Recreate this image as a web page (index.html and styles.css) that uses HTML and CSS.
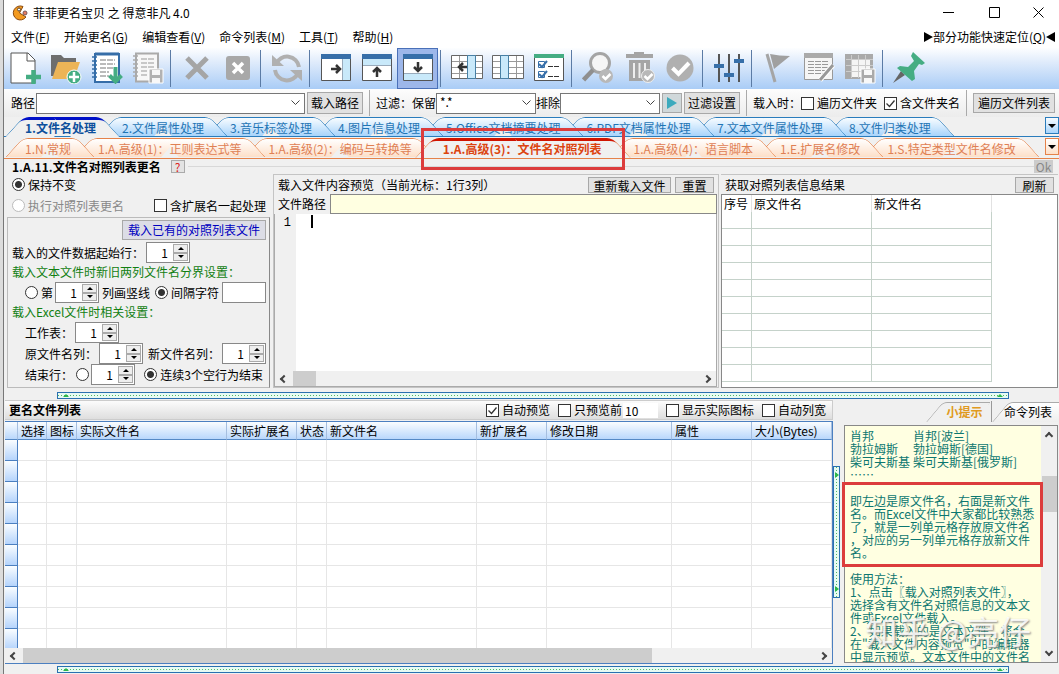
FILE: index.html
```
<!DOCTYPE html>
<html lang="zh-CN">
<head>
    <meta charset="UTF-8">
    <meta name="viewport" content="width=device-width, initial-scale=1.0">
    <title>菲菲更名宝贝 之 得意非凡 4.0</title>
    <link rel="stylesheet" href="styles.css">
</head>
<body>

<div class="desktop-edge"></div>
<div class="window">
    <header class="titlebar">
        <svg width="18" height="18" viewBox="0 0 18 18">
            <path d="M12 2.500A7 7 0 1 0 15 13L8.500 9z" fill="#f39a20" stroke="#8a4a10"/>
            <circle cx="8" cy="5.500" r="1.500" fill="#fff" stroke="#543"/>
            <circle cx="14" cy="9" r="2" fill="#e77c62" stroke="#755"/>
        </svg>
        <h1>菲菲更名宝贝 之 得意非凡 4.0</h1>
        <button class="win-button" aria-label="最小化"><svg width="11" height="11"><path d="M0 5.500H11" stroke="#000"/></svg></button>
        <button class="win-button" aria-label="最大化"><svg width="11" height="11"><path d="M.5 .5h10v10H.5z" fill="none" stroke="#000"/></svg></button>
        <button class="win-button" aria-label="关闭"><svg width="11" height="11"><path d="M.5 .5l10 10M10.500 .5l-10 10" stroke="#000"/></svg></button>
    </header>

    <nav class="menu">
        <button>文件(<u>F</u>)</button>
        <button>开始更名(<u>G</u>)</button>
        <button>编辑查看(<u>V</u>)</button>
        <button>命令列表(<u>M</u>)</button>
        <button>工具(<u>T</u>)</button>
        <button>帮助(<u>H</u>)</button>
        <button class="quick"><i class="tri-right"></i>部分功能快速定位(<u>Q</u>)<i class="tri-left"></i></button>
    </nav>

    <div class="toolbar">
        <button aria-label="新建"><svg viewBox="0 0 32 32"><path d="M2 1h17l7 7v23H2z" fill="#fff" stroke="#555"/><path d="M18 1v8h8" fill="none" stroke="#555"/><path d="M24.500 18v14M17 25h15" stroke="#45ad83" stroke-width="4.500"/></svg></button>
        <button aria-label="打开"><svg viewBox="0 0 32 32"><path d="M1 3h10l3 3h12v6H8L4 24H1z" fill="#6e6e6e"/><path d="M8 10h22l-6 17H2z" fill="#ecb457"/><circle cx="24" cy="25" r="7" fill="#45ad83" stroke="#fff"/><path d="M24 20v10M19 25h10" stroke="#fff" stroke-width="2.500"/></svg></button>
        <button aria-label="载入"><svg viewBox="0 0 32 32"><path d="M4 2h24v28H4z" fill="#fff" stroke="#356da8" stroke-width="2"/><path d="M4 2h24" stroke="#356da8" stroke-width="3"/><path d="M9 8h15M9 12h15M9 16h15M9 20h9M9 24h9" stroke="#777" stroke-dasharray="6 1"/><path d="M1 5h5M1 9h5M1 13h5M1 17h5M1 21h5M1 25h5" stroke="#356da8" stroke-width="1.500"/><path d="M24.500 15v14M18.500 23.500l6 6 6-6" fill="none" stroke="#45ad83" stroke-width="4"/></svg></button>
        <button aria-label="保存"><svg viewBox="0 0 32 32"><path d="M4 1.500h22v28H4z" fill="#f7f7f7" stroke="#aaa" stroke-width="2"/><path d="M9 7h14M9 11h14M9 15h14M9 19h7M9 23h7" stroke="#999" stroke-dasharray="6 1"/><path d="M1 4h5M1 8h5M1 12h5M1 16h5M1 20h5M1 24h5" stroke="#aaa" stroke-width="1.500"/><path d="M17 17h14v14H17z" fill="#b2b2b2" stroke="#fff"/><path d="M20 18h8v5h-8zM20 26h8v5h-8z" fill="#f8f8f8"/></svg></button>
        <span class="sep"></span>
        <button aria-label="删除"><svg viewBox="0 0 32 32"><path d="M6 6l20 20M26 6L6 26" stroke="#a5a5a5" stroke-width="5"/></svg></button>
        <button aria-label="清空"><svg viewBox="0 0 32 32"><rect x="4" y="4" width="24" height="24" rx="3" fill="#a8a8a8"/><path d="M11 11l10 10M21 11L11 21" stroke="#fff" stroke-width="3.500"/></svg></button>
        <span class="sep"></span>
        <button aria-label="刷新列表"><svg viewBox="0 0 32 32"><path d="M5 12A12 12 0 0 1 28 15M27 21A12 12 0 0 1 4 18" fill="none" stroke="#b0b0b0" stroke-width="4"/><path d="M1 3v11h12zM31 29V18H19z" fill="#b0b0b0"/></svg></button>
        <span class="sep"></span>
        <button aria-label="右侧面板"><svg viewBox="0 0 32 32"><path d="M1.500 3.500h29v25h-29z" fill="#fff" stroke="#555"/><path d="M1 2h30v5H1z" fill="#376fa9"/><path d="M23 7h7v21h-7z" fill="#c9e9fa"/><path d="M22.500 7v21" stroke="#9ab"/><path d="M11 17h9M16 13l4 4-4 4" fill="none" stroke="#333" stroke-width="2.500"/></svg></button>
        <button aria-label="上部面板"><svg viewBox="0 0 32 32"><path d="M1.500 3.500h29v25h-29z" fill="#fff" stroke="#555"/><path d="M1 2h30v5H1z" fill="#376fa9"/><path d="M2 7h28v6H2z" fill="#c9e9fa"/><path d="M2 13.500h28" stroke="#9ab"/><path d="M16 25v-9M12 20l4-4 4 4" fill="none" stroke="#333" stroke-width="2.500"/></svg></button>
        <button class="pressed" aria-label="下部面板"><svg viewBox="0 0 32 32"><path d="M1.500 3.500h29v25h-29z" fill="#fff" stroke="#555"/><path d="M1 2h30v5H1z" fill="#376fa9"/><path d="M2 22h28v6H2z" fill="#c9e9fa"/><path d="M2 21.500h28" stroke="#9ab"/><path d="M16 10v9M12 15l4 4 4-4" fill="none" stroke="#333" stroke-width="2.500"/></svg></button>
        <span class="sep"></span>
        <button aria-label="插入列"><svg viewBox="0 0 32 32"><path d="M.5 3.500h31v23H.5z" fill="#fff" stroke="#666"/><path d="M1 9.500h30M1 15.500h30M1 21.500h30M8.500 4v22M24.500 4v22" stroke="#999"/><path d="M16.500 3.500h8v23h-8z" fill="#c9e9fa" stroke="#4780a5"/><path d="M16 15H8M12 11l-4 4 4 4" fill="none" stroke="#333" stroke-width="2.500"/></svg></button>
        <button aria-label="选择列"><svg viewBox="0 0 32 32"><path d="M.5 3.500h31v23H.5z" fill="#fff" stroke="#666"/><path d="M1 9.500h30M1 15.500h30M1 21.500h30M8.500 4v22M24.500 4v22" stroke="#999"/><path d="M8.500 3.500h8v23h-8z" fill="#c9e9fa" stroke="#4780a5"/></svg></button>
        <button aria-label="选项"><svg viewBox="0 0 32 32"><path d="M1.500 3.500h29v25h-29z" fill="#fff" stroke="#555"/><path d="M1 2h30v4H1z" fill="#45ad83"/><path d="M5.500 9.500h6v6h-6zM5.500 19.500h6v6h-6z" fill="none" stroke="#376fa9"/><path d="M6 12l3 3 5-6M6 22l3 3 5-6" fill="none" stroke="#376fa9" stroke-width="2"/><path d="M15 14.500h12M15 24.500h12" stroke="#333" stroke-dasharray="5 1"/></svg></button>
        <span class="sep"></span>
        <button aria-label="查找"><svg viewBox="0 0 32 32"><circle cx="18" cy="11" r="9.500" fill="#f6f6f6" stroke="#a5a5a5" stroke-width="3"/><path d="M11 18L1.500 28" stroke="#8f8f8f" stroke-width="4.500"/><circle cx="24" cy="24" r="7" fill="#b8b8b8"/><path d="M20.500 24l3 3 5-5" fill="none" stroke="#fff" stroke-width="2.500"/></svg></button>
        <button aria-label="清理"><svg viewBox="0 0 32 32"><path d="M11 2V0h10v2h9v4H3V2zM6 8h21v21H6z" fill="#a5a5a5"/><path d="M11 11v15M16.500 11v15M22 11v9" stroke="#eee" stroke-width="2"/><circle cx="25" cy="24" r="6.500" fill="#b8b8b8" stroke="#eee"/><path d="M21.500 24l3 3 5-5" fill="none" stroke="#fff" stroke-width="2.500"/></svg></button>
        <button aria-label="确认"><svg viewBox="0 0 32 32"><circle cx="16" cy="16" r="13.500" fill="#b0b0b0"/><path d="M8.500 16l6 6L25 11" fill="none" stroke="#fff" stroke-width="4"/></svg></button>
        <span class="sep"></span>
        <button aria-label="调整"><svg viewBox="0 0 32 32"><path d="M6 2v28M16 2v28M26 2v28" stroke="#555" stroke-width="2"/><path d="M1 12h10v4H1zM11 21h10v4H11zM21 7h10v4H21z" fill="#376fa9"/></svg></button>
        <span class="sep"></span>
        <button aria-label="标记"><svg viewBox="0 0 32 32"><path d="M5 2l8 28" stroke="#a5a5a5" stroke-width="3"/><path d="M8 2q9 2 20 2l-16 13z" fill="#a0a0a0"/></svg></button>
        <button aria-label="编辑列表"><svg viewBox="0 0 32 32"><path d="M1.500 2.500h28v25h-28z" fill="#f5f5f5" stroke="#999"/><path d="M1 1h29v5H1z" fill="#aaa"/><path d="M5 9.500h21M5 12.500h21M5 15.500h21M5 18.500h19M5 21.500h15" stroke="#999" stroke-dasharray="6 1"/><path d="M30 13L17 28" stroke="#fff" stroke-width="5"/><path d="M30 13L17 28" stroke="#999" stroke-width="3"/></svg></button>
        <button aria-label="保存表格"><svg viewBox="0 0 32 32"><path d="M1 2h28v25H1z" fill="#aaa"/><path d="M8 8h18v17H8z" fill="#f5f5f5"/><path d="M2 7.500h27M2 13.500h27M2 19.500h27M7.500 3v23M14.500 3v23M21.500 3v23" stroke="#ccc"/><path d="M17 17h14v14H17z" fill="#aaa" stroke="#fff"/><path d="M20 18h8v5h-8zM20 26h8v5h-8z" fill="#f8f8f8"/></svg></button>
        <span class="sep"></span>
        <button aria-label="置顶"><svg viewBox="0 0 32 32"><path d="M0 31l8-12 4 4z" fill="#666"/><path d="M20 0l12 11-3 2-3-1-5 7 1 8-3 2L4 16l3-2 8 1 6-6-3-5z" fill="#45ad83"/></svg></button>
    </div>

    <div class="pathbar">
        <label for="path">路径</label>
        <select id="path" class="path-select"><option></option></select>
        <button class="btn load-path">载入路径</button>
        <span class="bar-sep"></span>
        <label for="keep">过滤：保留</label>
        <select id="keep" class="filter-select"><option>*.*</option></select>
        <label for="exclude">排除</label>
        <select id="exclude" class="filter-select"><option></option></select>
        <button class="btn play" aria-label="应用过滤"><svg width="12" height="12"><path d="M1 0v12l10-6z" fill="#3caabd"/></svg></button>
        <button class="btn filter-set">过滤设置</button>
        <span class="bar-sep"></span>
        <span>载入时：</span>
        <label class="check"><input type="checkbox">遍历文件夹</label>
        <label class="check gap-left"><input type="checkbox" checked>含文件夹名</label>
        <span class="bar-sep"></span>
        <button class="btn list-all">遍历文件列表</button>
    </div>

    <div class="tabs blue">
        <button class="tab active">1.文件名处理</button>
        <button class="tab">2.文件属性处理</button>
        <button class="tab">3.音乐标签处理</button>
        <button class="tab">4.图片信息处理</button>
        <button class="tab">5.Office文档摘要处理</button>
        <button class="tab">6.PDF文档属性处理</button>
        <button class="tab">7.文本文件属性处理</button>
        <button class="tab">8.文件归类处理</button>
        <button class="tab-more" aria-label="更多标签"></button>
    </div>
    <div class="tabs orange">
        <button class="tab">1.N.常规</button>
        <button class="tab">1.A.高级(1)：正则表达式等</button>
        <button class="tab">1.A.高级(2)：编码与转换等</button>
        <button class="tab active">1.A.高级(3)：文件名对照列表<span class="mark"></span></button>
        <button class="tab">1.A.高级(4)：语言脚本</button>
        <button class="tab">1.E.扩展名修改</button>
        <button class="tab">1.S.特定类型文件名修改</button>
        <button class="tab-more" aria-label="更多功能"></button>
    </div>

    <div class="group-title">
        <h2>1.A.11.文件名对照列表更名</h2>
        <button class="help">?</button>
        <span class="rule"></span>
        <button class="ok" disabled>Ok</button>
    </div>

    <main class="work">
        <section class="options">
            <div class="option-row"><label class="check"><input type="radio" name="mode" checked>保持不变</label></div>
            <div class="option-row">
                <label class="check muted"><input type="radio" name="mode" disabled>执行对照列表更名</label>
                <label class="check push"><input type="checkbox">含扩展名一起处理</label>
            </div>
            <div class="settings">
                <button class="btn load-list">载入已有的对照列表文件</button>
                <div class="row">
                    <label for="start">载入的文件数据起始行：</label>
                    <span class="spin"><input id="start" value="1"><span class="arrows"><button aria-label="加"></button><button aria-label="减"></button></span></span>
                </div>
                <div class="caption">载入文本文件时新旧两列文件名分界设置：</div>
                <div class="row indent">
                    <label class="check"><input type="radio" name="split">第</label>
                    <span class="spin"><input aria-label="列" value="1"><span class="arrows"><button aria-label="加"></button><button aria-label="减"></button></span></span>
                    <span class="after">列画竖线</span>
                    <label class="check push"><input type="radio" name="split" checked>间隔字符</label>
                    <input class="char" aria-label="间隔字符">
                </div>
                <div class="caption">载入Excel文件时相关设置：</div>
                <div class="row indent">
                    <label for="sheet">工作表：</label>
                    <span class="spin"><input id="sheet" value="1"><span class="arrows"><button aria-label="加"></button><button aria-label="减"></button></span></span>
                </div>
                <div class="row indent">
                    <label for="old">原文件名列：</label>
                    <span class="spin"><input id="old" value="1"><span class="arrows"><button aria-label="加"></button><button aria-label="减"></button></span></span>
                    <label for="new" class="push">新文件名列：</label>
                    <span class="spin"><input id="new" value="1"><span class="arrows"><button aria-label="加"></button><button aria-label="减"></button></span></span>
                </div>
                <div class="row indent">
                    <label class="check">结束行：<input type="radio" name="end"></label>
                    <span class="spin"><input aria-label="结束行" value="1"><span class="arrows"><button aria-label="加"></button><button aria-label="减"></button></span></span>
                    <label class="check push end"><input type="radio" name="end" checked>连续3个空行为结束</label>
                </div>
            </div>
        </section>

        <section class="preview">
            <div class="panel-head">
                <span>载入文件内容预览（当前光标：1行3列）</span>
                <button class="btn small reload">重新载入文件</button>
                <button class="btn small reset">重置</button>
            </div>
            <div class="file-row">
                <label for="file">文件路径</label>
                <input id="file">
            </div>
            <div class="editor">
                <div class="lines"><span class="gutter">1</span><span class="caret"></span></div>
                <div class="hscroll"><i class="arrow left"></i><span class="thumb"></span><i class="arrow right"></i></div>
            </div>
        </section>

        <section class="result">
            <div class="panel-head">
                <span>获取对照列表信息结果</span>
                <button class="btn small refresh">刷新</button>
            </div>
            <div class="result-box">
                <table class="result-table">
                    <thead><tr><th class="c-no">序号</th><th>原文件名</th><th>新文件名</th></tr></thead>
                    <tbody id="resultRows"></tbody>
                </table>
            </div>
        </section>
    </main>

    <div class="splitter"><i></i><i></i></div>

    <div class="bottom">
        <section class="list">
            <div class="list-head">
                <h2>更名文件列表</h2>
                <label class="check"><input type="checkbox" checked>自动预览</label>
                <label class="check"><input type="checkbox">只预览前</label>
                <input class="count" value="10" aria-label="预览数量">
                <label class="check"><input type="checkbox">显示实际图标</label>
                <label class="check"><input type="checkbox">自动列宽</label>
            </div>
            <div class="list-box">
                <div class="list-scroll">
                    <table class="list-table">
                        <colgroup><col class="w13"><col class="w29"><col class="w30"><col class="w150"><col class="w70"><col class="w30"><col class="w150"><col class="w70"><col class="w125"><col class="w80"><col></colgroup>
                        <thead><tr><th></th><th>选择</th><th>图标</th><th>实际文件名</th><th>实际扩展名</th><th>状态</th><th>新文件名</th><th>新扩展名</th><th>修改日期</th><th>属性</th><th>大小(Bytes)</th></tr></thead>
                        <tbody id="fileRows"></tbody>
                    </table>
                </div>
                <div class="hscroll"><i class="arrow left"></i><span class="thumb long"></span><i class="arrow right"></i></div>
            </div>
        </section>
        <div class="vsplitter"><i></i><i></i></div>
        <aside class="side">
            <div class="side-tabs">
                <button class="side-tab active">小提示</button>
                <button class="side-tab">命令列表</button>
            </div>
            <div class="tips">
                <div class="tips-text"><span class="name">肖邦</span>肖邦[波兰]
<span class="name">勃拉姆斯</span>勃拉姆斯[德国]
<span class="name">柴可夫斯基</span>柴可夫斯基[俄罗斯]
……

即左边是原文件名，右面是新文件
名。而Excel文件中大家都比较熟悉
了，就是一列单元格存放原文件名
，对应的另一列单元格存放新文件
名。

使用方法：
1、点击〖载入对照列表文件〗，
选择含有文件名对照信息的文本文
件或Excel文件载入。
2、如果载入的是文本文件，将会
在"载入文件内容预览"中的编辑器
中显示预览。文本文件中的文件名</div>
                <div class="vscroll"><i class="arrow up"></i><span class="thumb"></span><i class="arrow down"></i></div>
                <span class="tips-mark"></span>
                <span class="watermark">知乎 @亮仔</span>
            </div>
        </aside>
    </div>

    <div class="splitter"><i></i><i></i></div>
</div>

<script>
    function fillRows(id, rows, cols) {
        document.getElementById(id).innerHTML = ('<tr>' + '<td></td>'.repeat(cols) + '</tr>').repeat(rows);
    }
    fillRows('resultRows', 10, 3);
    fillRows('fileRows', 12, 11);
</script>

</body>
</html>
```
FILE: styles.css
```
* {
    box-sizing: border-box;
}
body {
    margin: 0;
    display: flex;
    height: 100vh;
    overflow: hidden;
    background: #f0f0f0;
    color: #000;
    font: 12px/14px "Noto Sans CJK SC", sans-serif;
    white-space: nowrap;
}
button, input, select {
    margin: 0;
    padding: 0;
    border: 0;
    background: none;
    color: inherit;
    font: inherit;
}
h1, h2 {
    margin: 0;
    font-size: 12px;
}
h1 {
    font-weight: normal;
}
.desktop-edge {
    width: 4px;
    background: #dcdcdc;
    border-right: 1px solid #777;
}
.window {
    flex: 1;
    min-width: 0;
    display: flex;
    flex-direction: column;
}

/* title and menu */
.titlebar {
    display: flex;
    align-items: center;
    height: 25px;
    padding-left: 7px;
    background: #fff;
}
.titlebar h1 {
    flex: 1;
    padding-left: 4px;
}
.win-button {
    width: 46px;
    height: 25px;
}
.win-button svg {
    display: block;
    margin: auto;
}
.win-button:last-child {
    width: 42px;
}
.menu {
    display: flex;
    align-items: center;
    gap: 14px;
    height: 25px;
    padding: 0 4px 2px 7px;
    background: #fff;
}
.quick {
    display: flex;
    align-items: center;
    margin-left: auto;
}
.tri-right, .tri-left {
    border: 5px solid transparent;
}
.tri-right {
    border-left: 9px solid #000;
    border-right: 0;
}
.tri-left {
    border-right: 9px solid #000;
    border-left: 0;
}

/* icon toolbar */
.toolbar {
    display: flex;
    height: 41px;
    margin-top: -2px;
    background: linear-gradient(#fdfeff, #dfebfb 35%, #a9ccf6);
}
.toolbar button {
    width: 41px;
    padding: 3px 4px 5px;
    border: 1px solid transparent;
}
.toolbar svg {
    display: block;
    width: 32px;
    height: 32px;
}
.toolbar .pressed {
    border-color: #4a70b8;
    background: #9db7ea;
}
.sep {
    width: 8px;
    margin: 2px 0;
    background: linear-gradient(#5b7ba5, #5b7ba5) 2px 0 / 1px 100% no-repeat;
}

/* path and filter */
.pathbar {
    display: flex;
    align-items: center;
    height: 28px;
    padding: 0 4px 0 7px;
    background: linear-gradient(#fdfdfd, #ececec);
}
select {
    height: 21px;
    padding: 0 20px 3px 3px;
    border: 1px solid #777;
    appearance: none;
    background: #fff url("data:image/svg+xml,%3Csvg xmlns='http://www.w3.org/2000/svg' width='9' height='6'%3E%3Cpath d='M.5 .5l4 4 4-4' fill='none' stroke='%23444'/%3E%3C/svg%3E") right 4px center no-repeat;
}
.path-select {
    flex: 1;
    margin: 0 2px 0 1px;
}
.filter-select {
    width: 100px;
}
.btn {
    border: 1px solid #a8a8a8;
    background: #e1e1e1;
    height: 22px;
}
.load-path {
    width: 56px;
}
.play {
    width: 20px;
    height: 20px;
    margin: 0 2px;
    background: #d0d8da;
}
.play svg {
    display: block;
    margin: auto;
}
.filter-set {
    width: 56px;
}
.list-all {
    width: 82px;
    height: 20px;
}
.bar-sep {
    width: 1px;
    height: 26px;
    margin: 0 6px;
    background: #aaa;
}
.check {
    display: flex;
    align-items: center;
    gap: 3px;
}
.gap-left {
    margin-left: 7px;
}
input[type="checkbox"], input[type="radio"] {
    appearance: none;
    flex: none;
    width: 13px;
    height: 13px;
    border: 1px solid #333;
    background: #fff;
}
input[type="checkbox"]:checked {
    background: #fff url("data:image/svg+xml,%3Csvg xmlns='http://www.w3.org/2000/svg' width='11' height='11'%3E%3Cpath d='M1.500 5.500l3 3 5-6' fill='none' stroke='%23333' stroke-width='1.3'/%3E%3C/svg%3E");
}
input[type="radio"] {
    border-radius: 50%;
}
input[type="radio"]:checked {
    background: radial-gradient(circle, #333 3px, #fff 4px);
}
input[type="radio"]:disabled {
    border-color: #bbb;
}
.muted {
    color: #888;
}
.push {
    margin-left: auto;
}

/* slanted tabs */
.tabs {
    position: relative;
    z-index: 0;
    display: flex;
    height: 20px;
    padding-left: 1px;
    border-bottom: 1px solid #2a7cbc;
    --line: #2a7cbc;
    --fill: linear-gradient(#f8fcff, #a8d4fb);
    color: #1f75b5;
}
.orange {
    height: 21px;
    margin-top: 1px;
    z-index: 1;
    border-color: #e5824a;
    --line: #e5824a;
    --fill: linear-gradient(#fff, #fddfc8);
    color: #df8054;
}
.tab {
    position: relative;
    flex: none;
    height: 20px;
    margin-left: -22px;
    padding: 2px 24px 0;
    z-index: 1;
}
.orange .tab {
    margin-left: -21px;
}
.tabs .tab:first-child {
    margin-left: 0;
    padding-left: 20px;
}
.tab::before, .tab::after {
    content: "";
    position: absolute;
    top: 0;
    bottom: 1px;
    z-index: -1;
    border-top: 1px solid var(--line);
    background: var(--fill);
}
.tab::before {
    left: 9px;
    right: 50%;
    border-left: 1px solid var(--line);
    border-top-left-radius: 6px;
    transform: skewX(-42deg);
}
.tab::after {
    left: 50%;
    right: 9px;
    border-right: 1px solid var(--line);
    border-top-right-radius: 6px;
    transform: skewX(42deg);
}
.tab:nth-child(1) { z-index: 9; }
.tab:nth-child(2) { z-index: 8; }
.tab:nth-child(3) { z-index: 7; }
.tab:nth-child(4) { z-index: 6; }
.tab:nth-child(5) { z-index: 5; }
.tab:nth-child(6) { z-index: 4; }
.tab:nth-child(7) { z-index: 3; }
.tab:nth-child(8) { z-index: 2; }
.tabs .tab.active {
    z-index: 10;
    font-weight: bold;
    color: #0d4f9c;
    --fill: #f0f0f0;
}
.tab.active::before, .tab.active::after {
    border-top: 3px solid #0010c8;
    bottom: 0;
}
.orange .tab.active {
    padding: 2px 29px 0 28px;
    color: #dc4410;
}
.orange .tab.active::before, .orange .tab.active::after {
    border-top-color: #d01400;
}
.tab-more {
    width: 14px;
    height: 17px;
    margin-left: auto;
    border: 1px solid var(--line);
    background: var(--fill);
}
.tab-more::after {
    content: "";
    display: block;
    width: 0;
    margin: auto;
    border: 4px solid transparent;
    border-top-color: #000;
    border-bottom: 0;
}
.mark {
    position: absolute;
    inset: -10px 6px -12px 6px;
    border: 3px solid #dc3c3c;
}

/* work area */
.group-title {
    display: flex;
    align-items: center;
    height: 15px;
    padding: 0 6px 0 8px;
}
.help {
    width: 14px;
    height: 13px;
    margin-left: 10px;
    border: 1px solid #aaa;
    background: #e3e3e3;
    color: #d22;
    line-height: 11px;
}
.rule {
    flex: 1;
    height: 1px;
    margin-left: 3px;
    background: #d8d8d8;
}
.ok {
    width: 19px;
    height: 13px;
    background: #ccc;
    color: #888;
    line-height: 12px;
}
.work {
    display: flex;
    padding: 0 1px 2px 3px;
}
.options {
    width: 263px;
}
.option-row {
    display: flex;
    align-items: center;
    height: 21px;
    padding: 0 4px 0 5px;
}
.settings {
    margin-top: 1px;
    padding: 2px 3px 2px 4px;
    border: 1px solid #bbb;
    border-right-color: #888;
}
.load-list {
    display: block;
    width: 144px;
    height: 20px;
    margin: 0 0 2px auto;
    color: #0000c0;
    background: #dcdde6;
}
.row {
    display: flex;
    align-items: center;
    height: 21px;
}
.indent {
    padding-left: 13px;
}
.row .push.end {
    margin-right: 3px;
}
.after {
    padding-left: 3px;
}
.caption {
    height: 19px;
    line-height: 18px;
    color: #128012;
}
.spin {
    display: flex;
    width: 44px;
    height: 21px;
    margin-left: 2px;
    padding: 1px;
    border: 1px solid #888;
    background: #fff;
}
.spin input {
    flex: 1;
    min-width: 0;
    padding-right: 5px;
    text-align: right;
}
.arrows {
    display: flex;
    flex-direction: column;
    width: 15px;
}
.arrows button {
    display: grid;
    place-items: center;
    flex: 1;
    border: 1px solid #aaa;
    background: #eee;
}
.arrows button::after {
    content: "";
    border: 3px solid transparent;
    border-top: 0;
    border-bottom-color: #000;
}
.arrows button:last-child::after {
    border: 3px solid transparent;
    border-bottom: 0;
    border-top-color: #000;
}
.char {
    width: 44px;
    height: 21px;
    margin-left: 3px;
    border: 1px solid #888;
    background: #fff;
}
.preview {
    flex: 1;
    display: flex;
    flex-direction: column;
    margin-left: 3px;
    border: 1px solid #c4c4c4;
}
.panel-head {
    display: flex;
    align-items: center;
    gap: 4px;
    height: 19px;
    padding: 1px 4px 0;
}
.panel-head span {
    flex: 1;
}
.small {
    height: 16px;
    line-height: 13px;
}
.reload {
    width: 83px;
}
.reset {
    width: 39px;
}
.refresh {
    width: 39px;
}
.file-row {
    display: flex;
    align-items: center;
    gap: 4px;
    padding: 0 1px 0 4px;
}
.file-row input {
    flex: 1;
    height: 20px;
    border: 1px solid #888;
    background: #ffffe1;
}
.editor {
    flex: 1;
    display: flex;
    flex-direction: column;
    margin-right: 1px;
    border: 1px solid #aaa;
    border-top: 0;
    background: #fff;
}
.lines {
    flex: 1;
    display: flex;
}
.gutter {
    width: 21px;
    padding: 2px 5px;
    background: #f0f0f0;
    text-align: right;
    font-family: "Liberation Mono", monospace;
}
.caret {
    width: 2px;
    height: 13px;
    margin: 1px 0 0 15px;
    background: #000;
}
.hscroll {
    display: flex;
    align-items: center;
    height: 15px;
    background: #f0f0f0;
}
.arrow {
    width: 6px;
    height: 6px;
    margin: 0 6px;
    border: solid #444;
    border-width: 2px 2px 0 0;
}
.arrow.left {
    transform: rotate(-135deg);
}
.arrow.right {
    margin-left: auto;
    transform: rotate(45deg);
}
.arrow.up {
    transform: rotate(-45deg);
}
.arrow.down {
    margin-top: auto;
    transform: rotate(135deg);
}
.thumb {
    width: 23px;
    height: 15px;
    background: #cdcdcd;
}
.thumb.long {
    width: 76%;
}
.result {
    display: flex;
    flex-direction: column;
    width: 337px;
    margin-left: 2px;
    border-top: 1px solid #c4c4c4;
}
.result-box {
    flex: 1;
    overflow: hidden;
    border: 1px solid #888;
    background: #fff;
}
table {
    border-spacing: 0;
    table-layout: fixed;
}
th, td {
    padding: 0;
    text-align: left;
    font-weight: normal;
    overflow: hidden;
}
.result-table {
    width: 270px;
}
.result-table .c-no {
    width: 30px;
}
.result-table th {
    height: 17px;
    padding-left: 2px;
    border-right: 1px solid #e2e2e2;
}
.result-table td {
    height: 17px;
    border: solid #c5d2ca;
    border-width: 0 1px 1px 0;
}

/* green dotted splitters */
.splitter, .vsplitter {
    display: flex;
    flex: none;
    justify-content: space-between;
    border: 1px solid #2a70b0;
    background: #e7faf3 repeating-linear-gradient(90deg, #4fb862 0 1px, transparent 1px 3px) 0 2px / 100% 1px no-repeat;
}
.splitter {
    align-items: center;
    height: 7px;
    margin: 2px 50px 1px 53px;
    padding: 0 5px;
}
.splitter i {
    border: 3px solid transparent;
    border-top: 0;
    border-bottom: 3px solid #2cb84c;
}

/* bottom area */
.bottom {
    flex: 1;
    min-height: 0;
    display: flex;
    padding: 0 1px 0 1px;
}
.list {
    flex: 1;
    min-width: 0;
    display: flex;
    flex-direction: column;
}
.list-head {
    display: flex;
    align-items: center;
    gap: 8px;
    height: 20px;
    margin-bottom: 1px;
    padding: 0 6px 0 4px;
    border: 1px solid #ccc;
    border-left: 0;
    background: linear-gradient(#fcfcfc, #dedede);
}
.list-head h2 {
    flex: 1;
}
.count {
    width: 35px;
    height: 15px;
    margin-left: -7px;
    padding-left: 2px;
    background: #fff;
}
.list-box {
    flex: 1;
    min-height: 0;
    display: flex;
    flex-direction: column;
    border: solid #4b7fc0;
    border-width: 1px 1px 1px 0;
    background: #fff;
}
.list-scroll {
    flex: 1;
    overflow: hidden;
}
.list-table {
    width: 100%;
}
.w13 { width: 13px; }
.w29 { width: 29px; }
.w30 { width: 30px; }
.w70 { width: 70px; }
.w80 { width: 80px; }
.w125 { width: 125px; }
.w150 { width: 150px; }
.list-table th {
    height: 18px;
    padding-left: 3px;
    border-right: 1px solid #a5bedf;
    border-bottom: 1px solid #5589c6;
    background: linear-gradient(#fafdff, #b9d7fc);
}
.list-table td {
    height: 21px;
    border: solid #e6e6e6;
    border-width: 0 1px 1px 0;
}
.list-table td:first-child {
    border-color: #4b7fc0;
    background: linear-gradient(#fafdff, #b5d4fc);
}
.vsplitter {
    flex-direction: column;
    align-items: center;
    align-self: center;
    width: 7px;
    height: 132px;
    padding: 5px 0;
    background: #e7faf3 repeating-linear-gradient(#4fb862 0 1px, transparent 1px 3px) 2px 0 / 1px 100% no-repeat;
}
.vsplitter i {
    border: 3px solid transparent;
    border-right: 0;
    border-left: 4px solid #2cb84c;
}
.side {
    display: flex;
    flex-direction: column;
    width: 218px;
    padding: 1px 0 1px 1px;
}
.side-tabs {
    display: flex;
    justify-content: flex-end;
    height: 21px;
}
.side-tab {
    position: relative;
    width: 66px;
    z-index: 1;
    padding-left: 6px;
}
.side-tab::before {
    content: "";
    position: absolute;
    inset: 1px 0 0 0;
    z-index: -1;
    border: 1px solid #aaa;
    border-width: 1px 0 0 1px;
    border-top-left-radius: 5px;
    background: linear-gradient(#fff, #eee);
    transform: skewX(-40deg);
    transform-origin: bottom;
}
.side-tab.active {
    z-index: 2;
    padding-left: 12px;
    border-right: 1px solid #999;
    color: #e09a20;
    font-weight: bold;
}
.side-tab.active::before {
    right: 17px;
    background: #f0f0f0;
}
.tips {
    position: relative;
    flex: 1;
    min-height: 0;
    display: flex;
    margin: 3px 0 0 3px;
    border: 1px solid #888;
    background: #ffffe1;
}
.tips-text {
    flex: 1;
    overflow: hidden;
    padding: 3px 0 0 5px;
    color: #0c7770;
    line-height: 13px;
    white-space: pre;
}
.name {
    display: inline-block;
    width: 63px;
}
.vscroll {
    display: flex;
    flex-direction: column;
    align-items: center;
    width: 16px;
    padding: 7px 0;
    background: #f0f0f0;
}
.vscroll .thumb {
    width: 15px;
    height: 36px;
    margin-top: 37px;
}
.tips-mark {
    position: absolute;
    top: 56px;
    left: -3px;
    right: 14px;
    height: 85px;
    border: 3px solid #dc3c3c;
}
.watermark {
    position: absolute;
    right: 26px;
    bottom: 14px;
    color: rgba(255, 255, 255, 0.85);
    font-size: 32px;
    line-height: 36px;
    text-shadow: 1px 1px 2px #888;
}
```
